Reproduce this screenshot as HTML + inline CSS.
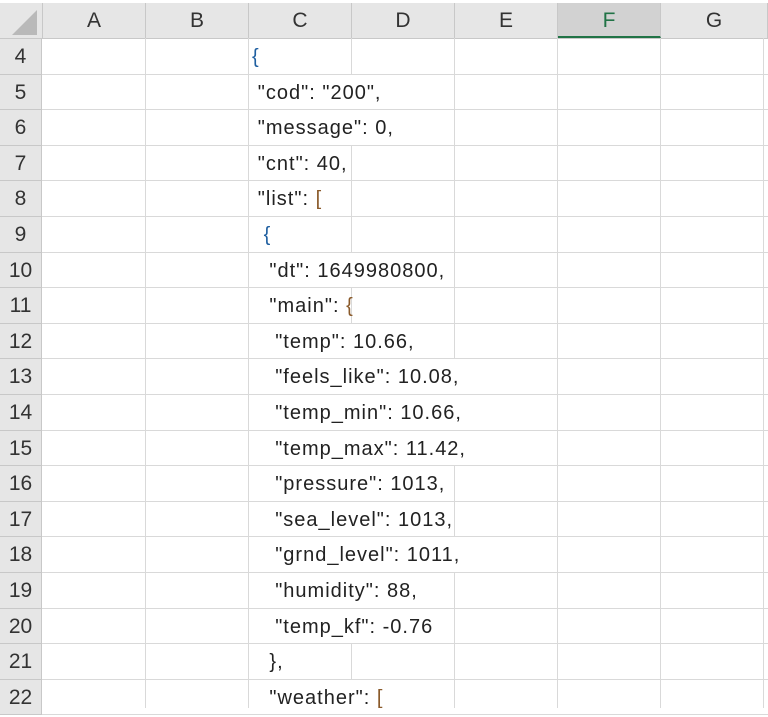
<!DOCTYPE html>
<html><head><style>
body{margin:0;width:768px;height:708px;overflow:hidden;background:#fff;font-family:"Liberation Sans",sans-serif;position:relative}
.hdr{position:absolute;top:3px;height:35px;background:#e6e6e6;border-right:1px solid #c8c8c8;box-sizing:border-box;text-align:center;line-height:36px;font-size:21px;color:#333}
.rn{position:absolute;left:0;width:42px;background:#e6e6e6;border-bottom:1px solid #c8c8c8;border-right:1px solid #c8c8c8;box-sizing:border-box;text-align:center;font-size:21px;color:#333}
.vl{position:absolute;top:38px;bottom:0;width:1px;background:#d9d9d9}
.hl{position:absolute;left:42px;right:0;height:1px;background:#d9d9d9}
.t{position:absolute;left:249px;background:#fff;font-size:20px;letter-spacing:1px;color:#222;white-space:pre;box-sizing:border-box;overflow:visible}
</style></head><body>
<div style="position:absolute;left:0;top:0;width:768px;height:3px;background:#fff"></div>
<div class="hdr" style="left:0;width:43px"><svg width="42" height="35" style="position:absolute;left:0;top:0"><polygon points="12,32 37,32 37,7" fill="#b9b9b9"/></svg></div>
<div class="hdr" style="left:43px;width:103px">A</div>
<div class="hdr" style="left:146px;width:103px">B</div>
<div class="hdr" style="left:249px;width:103px">C</div>
<div class="hdr" style="left:352px;width:103px">D</div>
<div class="hdr" style="left:455px;width:103px">E</div>
<div class="hdr" style="left:558px;width:103px;background:#d2d2d2;color:#217346;border-bottom:2px solid #217346">F</div>
<div class="hdr" style="left:661px;width:107px">G</div>
<div style="position:absolute;left:0;top:38px;width:768px;height:1px;background:#c8c8c8"></div>
<div class="vl" style="left:145px"></div><div class="vl" style="left:248px"></div><div class="vl" style="left:351px"></div><div class="vl" style="left:454px"></div><div class="vl" style="left:557px"></div><div class="vl" style="left:660px"></div><div class="vl" style="left:763px"></div>
<div id="rows"></div>
<script>
var data=[
["4",0,"{",352],
["5",1,"\"cod\": \"200\",",455],
["6",1,"\"message\": 0,",455],
["7",1,"\"cnt\": 40,",352],
["8",1,"\"list\": [",352],
["9",2,"{",352],
["10",3,"\"dt\": 1649980800,",455],
["11",3,"\"main\": {",352],
["12",4,"\"temp\": 10.66,",455],
["13",4,"\"feels_like\": 10.08,",558],
["14",4,"\"temp_min\": 10.66,",558],
["15",4,"\"temp_max\": 11.42,",558],
["16",4,"\"pressure\": 1013,",455],
["17",4,"\"sea_level\": 1013,",455],
["18",4,"\"grnd_level\": 1011,",558],
["19",4,"\"humidity\": 88,",455],
["20",4,"\"temp_kf\": -0.76",455],
["21",3,"},",352],
["22",3,"\"weather\": [",455]];
var h="",rh=35.6,top0=39;
data.forEach(function(d,i){
 var y=top0+i*rh;
 h+='<div class="rn" style="top:'+y+'px;height:'+rh+'px;line-height:'+rh+'px">'+d[0]+'</div>';
 h+='<div class="hl" style="top:'+(y+rh-1)+'px"></div>';
 var txt=d[2];
 txt=txt.replace(/^([\{\[])/,'<span style="color:#1f5fa0">$1</span>');
 txt=txt.replace(/: ([\{\[])$/,': <span style="color:#8a5a2a">$1</span>');
 h+='<div class="t" style="top:'+y+'px;height:'+(rh-1)+'px;line-height:'+(rh+2)+'px;width:'+(d[3]-249-1)+'px;padding-left:'+(3+5.8*d[1])+'px">'+txt+'</div>';
});
document.getElementById('rows').innerHTML=h;
</script>
</body></html>
